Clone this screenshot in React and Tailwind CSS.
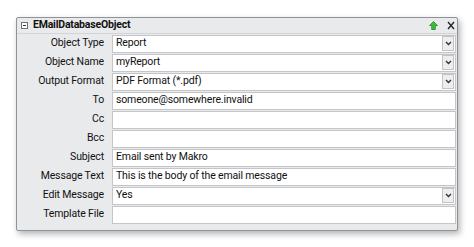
import React from "react";

const rows = [
  { label: "Object Type", value: "Report", combo: true },
  { label: "Object Name", value: "myReport", combo: true },
  { label: "Output Format", value: "PDF Format (*.pdf)", combo: true },
  { label: "To", value: "someone@somewhere.invalid" },
  { label: "Cc", value: "" },
  { label: "Bcc", value: "" },
  { label: "Subject", value: "Email sent by Makro" },
  { label: "Message Text", value: "This is the body of the email message" },
  { label: "Edit Message", value: "Yes", combo: true },
  { label: "Template File", value: "" },
];

function Chevron() {
  return (
    <svg width="7" height="5" viewBox="0 0 7 5">
      <path d="M1 1 L3.5 3.5 L6 1" fill="none" stroke="#333" strokeWidth="1.4" />
    </svg>
  );
}

export default function App() {
  return (
    <div
      className="w-[474px] h-[247px] bg-white pt-[17px] pl-[16px] overflow-hidden"
      style={{ fontFamily: 'Roboto, "Liberation Sans", sans-serif' }}
    >
      <div className="w-[442px] bg-[#e9eaec] border border-[#8f9296] rounded-[2px] shadow-[2px_3px_6px_rgba(0,0,0,0.3)] pb-[6px]">
        {/* header */}
        <div className="h-[16px] flex items-center border-b border-[#d2d4d7] pl-[4px] pr-[2px]">
          <div className="w-[7px] h-[7px] border border-[#707070] bg-white flex items-center justify-center">
            <div className="w-[3px] h-[1px] bg-[#333]"></div>
          </div>
          <span className="ml-[5px] text-[10.5px] font-bold tracking-[-0.2px] text-[#111] leading-none">
            EMailDatabaseObject
          </span>
          <div className="ml-auto flex items-center gap-[9px]">
            <svg width="9" height="9" viewBox="0 0 9 9">
              <path d="M4.5 0.5 L8.5 4.5 L6.3 4.5 L6.3 8.5 L2.7 8.5 L2.7 4.5 L0.5 4.5 Z" fill="#3cbf3a" stroke="#1f8a22" strokeWidth="0.8" />
            </svg>
            <svg width="8" height="9" viewBox="0 0 8 9">
              <path d="M1 1 L7 8 M7 1 L1 8" stroke="#222" strokeWidth="1.3" />
            </svg>
          </div>
        </div>

        {/* rows */}
        <div>
          {rows.map((r, i) => (
            <div key={i} className="flex items-center h-[19px]">
              <div className="w-[87px] text-right text-[10.5px] tracking-[-0.15px] text-[#111] leading-none">
                {r.label}
              </div>
              <div className="ml-[8px] mr-[1px] flex-1 h-[18px] bg-white border border-[#c3c5c8] flex items-center">
                <span className="flex-1 pl-[3px] text-[10.5px] tracking-[-0.15px] text-[#111] leading-none whitespace-nowrap">
                  {r.value}
                </span>
                {r.combo && (
                  <div className="w-[12px] h-[15px] mr-[1px] border border-[#c3c3c3] bg-[#eeeeee] flex items-center justify-center">
                    <Chevron />
                  </div>
                )}
              </div>
            </div>
          ))}
        </div>
      </div>
    </div>
  );
}
